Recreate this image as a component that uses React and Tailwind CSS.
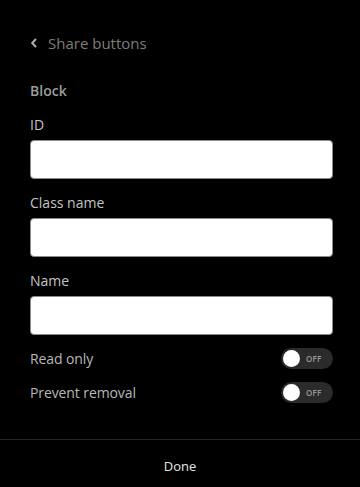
const Field = ({ label }) => (
  <div className="flex flex-col">
    <label className="h-5 leading-5 text-[14px] text-[#c4c4c4]">{label}</label>
    <input
      type="text"
      className="mt-[5px] h-[39px] w-full rounded-[4px] border border-[#8a8a8a] bg-white px-2 text-black outline-none"
    />
  </div>
);

const Toggle = ({ label }) => (
  <div className="flex h-[21px] items-center justify-between">
    <span className="text-[14px] tracking-[-0.1px] text-[#b8b8b8]">{label}</span>
    <div className="flex h-[21px] w-[52px] items-center rounded-full bg-[#2b2b2b] pl-[2px]">
      <div className="h-[17px] w-[17px] rounded-full bg-white" />
      <span className="ml-[6px] text-[8px] font-semibold tracking-wide text-[#9a9a9a]">OFF</span>
    </div>
  </div>
);

export default function App() {
  return (
    <div
      className="flex h-[487px] w-[360px] flex-col bg-black"
      style={{ fontFamily: '"Open Sans", "Noto Sans", sans-serif' }}
    >
      <div className="flex-1 pl-[30px] pr-[27px] pt-[33px]">
        {/* Header */}
        <div className="flex h-5 items-center gap-[9px] text-[#7d7d7d]">
          <svg width="9" height="12" viewBox="0 0 9 12" fill="none">
            <path d="M6 2 L2.2 6 L6 10" stroke="#b0b0b0" strokeWidth="2" />
          </svg>
          <span className="text-[15px]">Share buttons</span>
        </div>

        <div className="mt-[28px] h-5 leading-5 text-[14px] font-semibold text-[#9c9c9c]">Block</div>

        <div className="mt-[14px] flex flex-col gap-[14px]">
          <Field label="ID" />
          <Field label="Class name" />
          <Field label="Name" />
        </div>

        <div className="mt-[13px] flex flex-col gap-[13px]">
          <Toggle label="Read only" />
          <Toggle label="Prevent removal" />
        </div>
      </div>

      {/* Footer */}
      <div className="flex h-[48px] items-center justify-center border-t border-[#232323] pt-[6px]">
        <button type="button" className="text-[13px] text-[#e6e6e6]">
          Done
        </button>
      </div>
    </div>
  );
}
